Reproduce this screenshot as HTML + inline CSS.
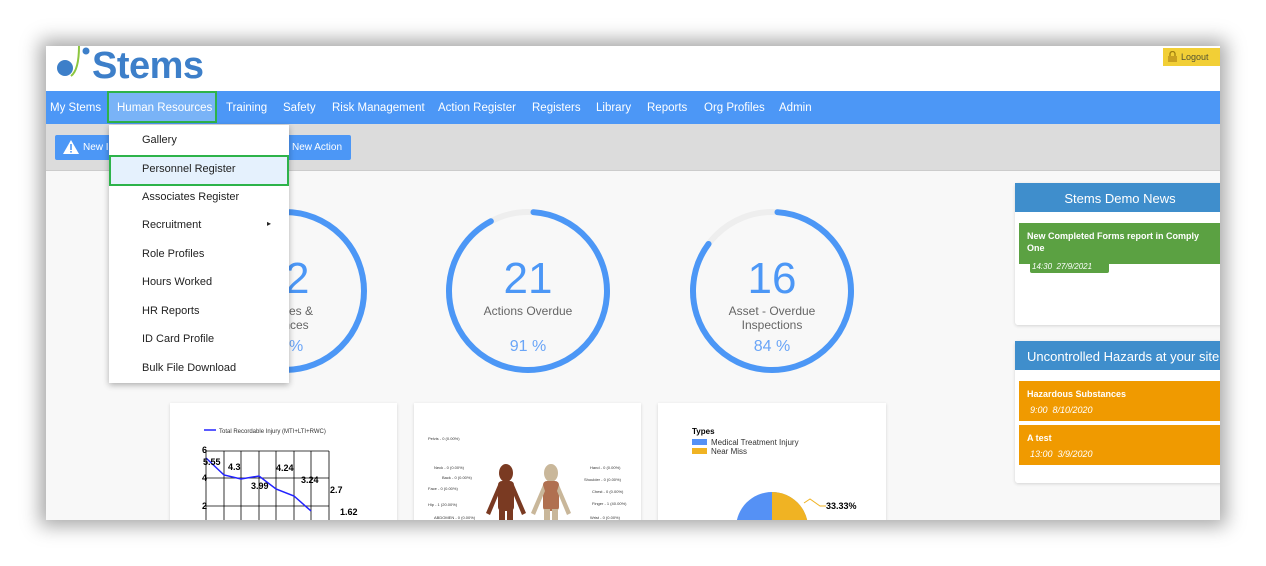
<!DOCTYPE html>
<html><head><meta charset="utf-8"><style>
*{margin:0;padding:0;box-sizing:border-box}
body{width:1266px;height:566px;background:#fff;font-family:"Liberation Sans",sans-serif;position:relative;overflow:hidden}
#frame{position:absolute;left:46px;top:46px;width:1174px;height:474px;background:#f8f8f8;overflow:hidden;box-shadow:0 0 18px 6px rgba(0,0,0,0.35)}
.abs{position:absolute}
#hdr{left:0;top:0;width:1174px;height:45px;background:#fff}
#nav{left:0;top:45px;width:1174px;height:33px;background:#4c97f6}
#nav span{position:absolute;top:11px;color:#fff;font-size:11.5px}
#tool{left:0;top:78px;width:1174px;height:47px;background:#dcdcdc;border-bottom:1px solid #ccc}
.btn{background:#4c97f6;color:#fff;font-size:10px;border-radius:2px}
.card{background:#fff;box-shadow:0 1px 3px rgba(0,0,0,0.15)}
#dd{left:63px;top:79px;width:180px;height:258px;background:#fff;box-shadow:0 2px 6px rgba(0,0,0,0.3)}
#dd div{position:absolute;left:33px;font-size:11px;color:#222}
.num{font-size:44px;color:#4c97f6;text-align:center;width:160px}
.lbl{font-size:12px;color:#666;text-align:center;width:160px;line-height:14px}
.pct{font-size:16px;color:#6aa5f7;text-align:center;width:160px}
.ph{background:#3f8ecc;color:#fff;text-align:center;font-size:13px}
.item{color:#fff;font-size:9px;font-weight:bold}
.item i{font-weight:normal;font-size:9px}
</style></head><body>
<div id="frame">
<div id="hdr" class="abs">
 <svg class="abs" style="left:8px;top:0" width="40" height="34"><circle cx="11" cy="22" r="8" fill="#3d7fc9"/><path d="M17 30 Q25 24 25 0" stroke="#8cc63f" stroke-width="2" fill="none"/><circle cx="32" cy="5" r="3.5" fill="#3d7fc9"/></svg>
 <div class="abs" style="left:46px;top:-1px;font-size:38px;font-weight:bold;color:#3d7fc9;letter-spacing:-0.5px">Stems</div>
 <div class="abs" style="left:1117px;top:2px;width:57px;height:18px;background:#f2cf36;font-size:9px;color:#553;padding:4px 0 0 18px">Logout</div>
 <svg class="abs" style="left:1121px;top:5px" width="11" height="11"><path d="M3 5 V3 A2.5 2.5 0 0 1 8 3 V5" stroke="#a08010" stroke-width="1.3" fill="none"/><rect x="1" y="5" width="9" height="6" fill="#c9a020"/></svg>
</div>
<div id="nav" class="abs">
 <span style="left:4px">My Stems</span>
 <div class="abs" style="left:61px;top:0;width:110px;height:32px;background:#79b3f7;border:2px solid #2db34a"></div>
 <span style="left:71px">Human Resources</span>
 <span style="left:180px">Training</span>
 <span style="left:237px">Safety</span>
 <span style="left:286px">Risk Management</span>
 <span style="left:392px">Action Register</span>
 <span style="left:486px">Registers</span>
 <span style="left:550px">Library</span>
 <span style="left:601px">Reports</span>
 <span style="left:658px">Org Profiles</span>
 <span style="left:733px">Admin</span>
</div>
<div id="tool" class="abs">
 <div class="abs btn" style="left:9px;top:11px;width:60px;height:25px;padding:7px 0 0 28px">New I</div>
 <svg class="abs" style="left:17px;top:16px" width="16" height="14"><path d="M8 0 L16 14 L0 14Z" fill="#fff"/><rect x="7.2" y="4" width="1.6" height="6" fill="#4c97f6"/><rect x="7.2" y="11" width="1.6" height="1.6" fill="#4c97f6"/></svg>
 <div class="abs btn" style="left:230px;top:11px;width:75px;height:25px;padding:7px 0 0 16px">New Action</div>
</div>
<svg class="abs" style="left:0;top:125px" width="900" height="220">
 <g fill="none" stroke-width="6">
  <circle cx="239" cy="120" r="79" stroke="#eee"/><circle cx="239" cy="120" r="79" stroke="#4c97f6" stroke-dasharray="447 500" transform="rotate(-90 239 120)"/>
  <circle cx="482" cy="120" r="79" stroke="#eee"/><circle cx="482" cy="120" r="79" stroke="#4c97f6" stroke-dasharray="452 500" stroke-linecap="round" transform="rotate(-86 482 120)"/>
  <circle cx="726" cy="120" r="79" stroke="#eee"/><circle cx="726" cy="120" r="79" stroke="#4c97f6" stroke-dasharray="417 500" stroke-linecap="round" transform="rotate(-86 726 120)"/>
 </g>
</svg>
<div class="abs num" style="left:159px;top:208px">12</div>
<div class="abs lbl" style="left:159px;top:258px">Courses &amp;<br>Licences</div>
<div class="abs pct" style="left:159px;top:292px">87 %</div>
<div class="abs num" style="left:402px;top:208px">21</div>
<div class="abs lbl" style="left:402px;top:258px">Actions Overdue</div>
<div class="abs pct" style="left:402px;top:292px">91 %</div>
<div class="abs num" style="left:646px;top:208px">16</div>
<div class="abs lbl" style="left:646px;top:258px">Asset - Overdue<br>Inspections</div>
<div class="abs pct" style="left:646px;top:292px">84 %</div>
<div class="abs card" style="left:124px;top:357px;width:227px;height:130px">
 <svg width="227" height="130" font-family="Liberation Sans" >
  <line x1="34" y1="27" x2="46" y2="27" stroke="#22f" stroke-width="1.5"/><text x="49" y="30" font-size="6" fill="#333">Total Recordable Injury (MTI+LTI+RWC)</text>
  <g stroke="#000" stroke-width="0.8"><line x1="36" y1="48" x2="36" y2="130"/><line x1="54" y1="48" x2="54" y2="130"/><line x1="71" y1="48" x2="71" y2="130"/><line x1="89" y1="48" x2="89" y2="130"/><line x1="106" y1="48" x2="106" y2="130"/><line x1="124" y1="48" x2="124" y2="130"/><line x1="141" y1="48" x2="141" y2="130"/><line x1="159" y1="48" x2="159" y2="130"/><line x1="36" y1="48" x2="159" y2="48"/><line x1="36" y1="75" x2="159" y2="75"/><line x1="36" y1="103" x2="159" y2="103"/></g>
  <polyline points="36,55 54,72 71,76 89,73 106,86 124,93 141,108" stroke="#22f" stroke-width="1.5" fill="none"/>
  <g font-size="9" font-weight="bold"><text x="32" y="50">6</text><text x="32" y="78">4</text><text x="32" y="106">2</text><text x="33" y="62">5.55</text><text x="58" y="67">4.3</text><text x="81" y="86">3.99</text><text x="106" y="68">4.24</text><text x="131" y="80">3.24</text><text x="160" y="90">2.7</text><text x="170" y="112">1.62</text></g>
 </svg>
</div>
<div class="abs card" style="left:368px;top:357px;width:227px;height:130px">
 <svg width="227" height="130"><g fill="#7a3a22"><ellipse cx="92" cy="70" rx="7" ry="9"/><rect x="84" y="78" width="16" height="30" rx="4"/><rect x="85" y="106" width="6" height="24"/><rect x="93" y="106" width="6" height="24"/><path d="M84 82 L72 110 L76 112 L86 88Z M100 82 L112 110 L108 112 L98 88Z"/></g><g fill="#c9b79a"><ellipse cx="137" cy="70" rx="7" ry="9"/><rect x="129" y="78" width="16" height="30" rx="4" fill="#b07050"/><rect x="130" y="106" width="6" height="24"/><rect x="138" y="106" width="6" height="24"/><path d="M129 82 L117 110 L121 112 L131 88Z M145 82 L157 110 L153 112 L143 88Z"/></g>
 <g font-size="4" fill="#333" font-family="Liberation Sans"><text x="14" y="37">Pelvis - 0 (0.00%)</text><text x="20" y="66">Neck - 0 (0.00%)</text><text x="28" y="76">Back - 0 (0.00%)</text><text x="14" y="87">Face - 0 (0.00%)</text><text x="14" y="103">Hip - 1 (20.00%)</text><text x="20" y="116">ABDOMEN - 0 (0.00%)</text><text x="176" y="66">Hand - 0 (0.00%)</text><text x="170" y="78">Shoulder - 0 (0.00%)</text><text x="178" y="90">Chest - 0 (0.00%)</text><text x="178" y="102">Finger - 1 (40.00%)</text><text x="176" y="116">Wrist - 0 (0.00%)</text></g></svg>
</div>
<div class="abs card" style="left:612px;top:357px;width:228px;height:130px">
 <svg width="228" height="130" font-family="Liberation Sans"><text x="34" y="31" font-size="8" font-weight="bold">Types</text><rect x="34" y="36" width="15" height="6" fill="#5591f5"/><text x="53" y="42" font-size="8" fill="#333">Medical Treatment Injury</text><rect x="34" y="45" width="15" height="6" fill="#f0b323"/><text x="53" y="51" font-size="8" fill="#333">Near Miss</text>
 <circle cx="114" cy="125" r="36" fill="#5591f5"/><path d="M114 125 L114 89 A36 36 0 0 1 144 145 Z" fill="#f0b323"/><polyline points="146,100 152,96 162,103 168,103" stroke="#f0b323" fill="none"/><text x="168" y="106" font-size="9" font-weight="bold">33.33%</text></svg>
</div>
<div id="dd" class="abs">
 <div style="top:9px">Gallery</div>
 <div class="abs" style="left:0;top:30px;width:180px;height:31px;background:#e5f1fd;border:2px solid #2db34a"></div>
 <div style="top:38px">Personnel Register</div>
 <div style="top:66px">Associates Register</div>
 <div style="top:94px">Recruitment</div>
 <div style="top:94px;left:158px;font-size:8px">&#9656;</div>
 <div style="top:123px">Role Profiles</div>
 <div style="top:151px">Hours Worked</div>
 <div style="top:180px">HR Reports</div>
 <div style="top:208px">ID Card Profile</div>
 <div style="top:237px">Bulk File Download</div>
</div>
<div class="abs card" style="left:969px;top:137px;width:210px;height:142px;border-radius:3px">
 <div class="ph" style="height:29px;padding-top:8px">Stems Demo News</div>
 <div class="abs" style="left:4px;top:40px;width:206px;height:41px;background:#5ba142;padding:7px 0 0 8px" ><div class="item" style="line-height:12px">New Completed Forms report in Comply<br>One</div></div>
 <div class="abs" style="left:15px;top:80px;width:79px;height:10px;background:#5ba142;border-radius:0 0 2px 2px;color:#fff;font-size:8px;font-style:italic;padding-left:2px;line-height:8px">14:30 &nbsp;27/9/2021</div>
</div>
<div class="abs card" style="left:969px;top:295px;width:210px;height:142px;border-radius:3px">
 <div class="ph" style="height:29px;padding-top:8px;text-align:left;padding-left:12px">Uncontrolled Hazards at your site</div>
 <div class="abs" style="left:4px;top:40px;width:206px;height:40px;background:#f09a00;padding:8px 0 0 8px"><div class="item">Hazardous Substances</div><div class="item" style="margin:6px 0 0 3px"><i>9:00 &nbsp;8/10/2020</i></div></div>
 <div class="abs" style="left:4px;top:84px;width:206px;height:40px;background:#f09a00;padding:8px 0 0 8px"><div class="item">A test</div><div class="item" style="margin:6px 0 0 3px"><i>13:00 &nbsp;3/9/2020</i></div></div>
</div>
</div>
</body></html>
